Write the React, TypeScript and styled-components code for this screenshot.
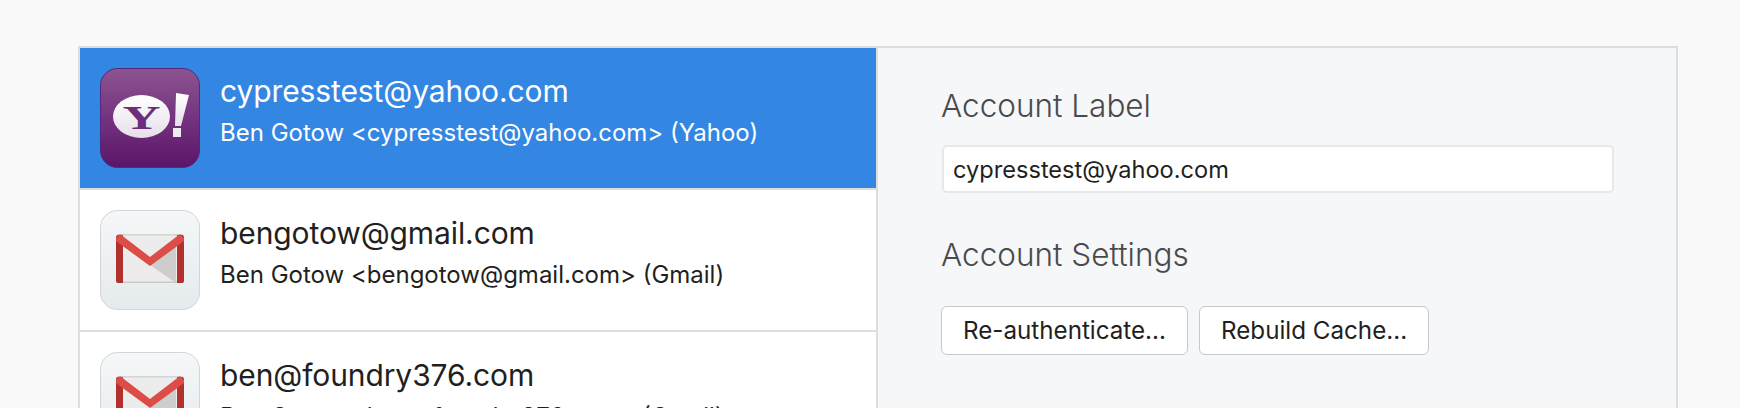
import styled, { createGlobalStyle } from 'styled-components';

const GlobalStyle = createGlobalStyle`
  html, body {
    margin: 0;
    height: 408px;
    overflow: hidden;
    background: #f9f9f9;
    font-family: Inter, "Liberation Sans", sans-serif;
  }
`;

const YahooIcon = () => (
  <svg width="100" height="100" viewBox="0 0 100 100">
    <defs>
      <linearGradient id="yahooBg" x1="0" y1="0" x2="0" y2="1">
        <stop offset="0" stopColor="#8c5490" />
        <stop offset="0.5" stopColor="#74337f" />
        <stop offset="1" stopColor="#5a1568" />
      </linearGradient>
      <linearGradient id="yahooWhite" x1="0" y1="0" x2="0" y2="1">
        <stop offset="0" stopColor="#ffffff" />
        <stop offset="1" stopColor="#e6dfe9" />
      </linearGradient>
    </defs>
    <rect x="0.5" y="0.5" width="99" height="99" rx="17" fill="url(#yahooBg)" stroke="#4f2a82" />
    <ellipse cx="41.5" cy="48.5" rx="28.5" ry="21.5" fill="url(#yahooWhite)" />
    <text x="41.5" y="60.5" textAnchor="middle" fontFamily="'Liberation Serif', serif" fontWeight="700" fontSize="33" fill="#6b2d7c" textLength="38" lengthAdjust="spacingAndGlyphs">Y</text>
    <polygon points="76,25 89,27 81,58 75,58" fill="url(#yahooWhite)" />
    <rect x="73" y="60" width="8" height="9" fill="#efe9f1" />
  </svg>
);

const GmailIcon = () => (
  <svg width="100" height="100" viewBox="0 0 100 100">
    <defs>
      <linearGradient id="gmailBg" x1="0" y1="0" x2="0" y2="1">
        <stop offset="0" stopColor="#f5f7f8" />
        <stop offset="1" stopColor="#e5eaed" />
      </linearGradient>
    </defs>
    <rect x="0.5" y="0.5" width="99" height="99" rx="17" fill="url(#gmailBg)" stroke="#d0d6d9" />
    <rect x="17" y="25" width="66" height="48" fill="#ececec" />
    <rect x="17" y="24" width="66" height="1.5" fill="#d4d4d4" />
    <rect x="17" y="71.5" width="66" height="1.5" fill="#c9c9c9" />
    <polygon points="50,55 76,34 76,73" fill="#cdcdcd" />
    <path d="M16 27 Q16 25 18 25 L23 25 L23 73 L18 73 Q16 73 16 71 Z" fill="#b3312c" />
    <path d="M77 25 L82 25 Q84 25 84 27 L84 71 Q84 73 82 73 L77 73 Z" fill="#b3312c" />
    <polygon points="16,31 16,28 20,24 50,47 80,24 84,28 84,31 76,37 50,56 24,37" fill="#dc4d48" />
  </svg>
);

const accounts = [
  { id: 1, label: 'cypresstest@yahoo.com', detail: 'Ben Gotow <cypresstest@yahoo.com> (Yahoo)', provider: 'yahoo' },
  { id: 2, label: 'bengotow@gmail.com', detail: 'Ben Gotow <bengotow@gmail.com> (Gmail)', provider: 'gmail' },
  { id: 3, label: 'ben@foundry376.com', detail: 'Ben Gotow <ben@foundry376.com> (Gmail)', provider: 'gmail' },
];

export default function App() {
  return (
    <>
      <GlobalStyle />
      <Page>
        <Panel>
          <AccountList>
            {accounts.map((account) => (
              <AccountRow key={account.id} $selected={account.id === 1}>
                <IconSlot>{account.provider === 'yahoo' ? <YahooIcon /> : <GmailIcon />}</IconSlot>
                <AccountText>
                  <AccountLabel>{account.label}</AccountLabel>
                  <AccountDetail>{account.detail}</AccountDetail>
                </AccountText>
              </AccountRow>
            ))}
          </AccountList>
          <Details>
            <Heading>Account Label</Heading>
            <LabelInput type="text" defaultValue="cypresstest@yahoo.com" readOnly />
            <SettingsHeading>Account Settings</SettingsHeading>
            <Buttons>
              <ActionButton>Re-authenticate...</ActionButton>
              <ActionButton>Rebuild Cache...</ActionButton>
            </Buttons>
          </Details>
        </Panel>
      </Page>
    </>
  );
}

const Page = styled.div`
  padding: 46px 62px 0 78px;
`;

const Panel = styled.div`
  display: grid;
  grid-template-columns: 798px 1fr;
  height: 600px;
  border: 2px solid #dddddd;
  border-bottom: none;
  background: #f6f7f9;
  box-sizing: border-box;
`;

const AccountList = styled.div`
  display: flex;
  flex-direction: column;
  background: #ffffff;
  border-right: 2px solid #dddddd;
`;

const AccountRow = styled.div<{ $selected: boolean }>`
  display: flex;
  gap: 20px;
  padding: 20px 20px 0;
  height: 120px;
  border-bottom: 2px solid #dddddd;
  background: ${(props) => (props.$selected ? '#3486e3' : '#ffffff')};
  color: ${(props) => (props.$selected ? '#ffffff' : '#231f20')};
`;

const IconSlot = styled.div`
  flex: none;
  width: 100px;
  height: 100px;
`;

const AccountText = styled.div`
  display: flex;
  flex-direction: column;
  padding-top: 4px;
`;

const AccountLabel = styled.div`
  font-size: 30px;
  line-height: 38px;
  letter-spacing: -0.1px;
`;

const AccountDetail = styled.div`
  font-size: 24px;
  line-height: 30px;
  margin-top: 8px;
`;

const Details = styled.div`
  display: flex;
  flex-direction: column;
  align-items: flex-start;
  padding: 37px 63px 0;
`;

const Heading = styled.h2`
  margin: 0;
  font-size: 31.5px;
  line-height: 42px;
  font-weight: 300;
  color: #4a4a4c;
`;

const SettingsHeading = styled(Heading)`
  margin-top: 41px;
`;

const LabelInput = styled.input`
  box-sizing: border-box;
  width: 672px;
  height: 48px;
  margin: 18px 0 0 1px;
  padding: 0 9px;
  border: 2px solid #e8e8ea;
  border-radius: 5px;
  background: #ffffff;
  color: #231f20;
  font-family: inherit;
  font-size: 23.6px;
  outline: none;
`;

const Buttons = styled.div`
  display: flex;
  gap: 11px;
  margin-top: 30px;
`;

const ActionButton = styled.button`
  box-sizing: border-box;
  height: 49px;
  padding: 0 21px;
  border: 1px solid #c8c8cc;
  border-radius: 6px;
  background: #ffffff;
  color: #231f20;
  font-family: inherit;
  font-size: 24.2px;
`;
